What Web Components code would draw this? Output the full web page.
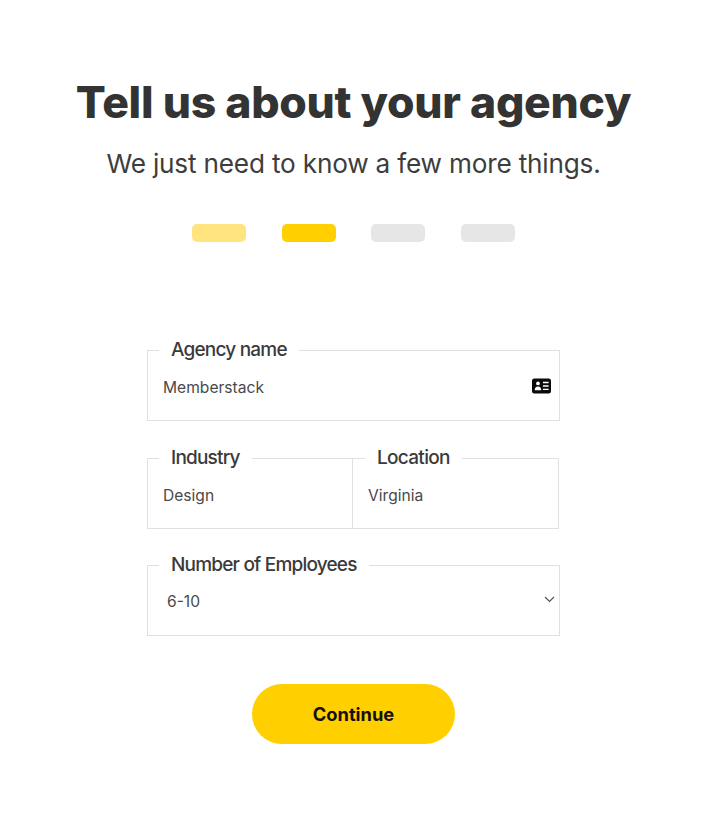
<!DOCTYPE html>
<html lang="en">
<head>
<meta charset="utf-8">
<title>Tell us about your agency</title>
<style>
  html, body { margin: 0; background: #fff; }
  body { font-family: "Inter", "Liberation Sans", sans-serif; color: #333; }
</style>
</head>
<body>
<agency-page>
  <page-heading slot="heading" title="Tell us about your agency" subtitle="We just need to know a few more things."></page-heading>
  <step-dots slot="steps" current="2" total="4"></step-dots>
  <agency-form slot="form">
    <form-field label="Agency name">
      Memberstack
      <svg slot="icon" width="19" height="16" viewBox="0 0 20 16">
        <path fill="#0a0a0a" fill-rule="evenodd" d="M2.5 0h15A2.5 2.5 0 0 1 20 2.500v11a2.500 2.500 0 0 1-2.500 2.500h-15A2.500 2.500 0 0 1 0 13.500v-11A2.500 2.500 0 0 1 2.500 0zM6.300 3.300a2 2 0 1 0 0 4 2 2 0 0 0 0-4zM2.800 12.600h7c0-2.500-1.300-4-3.500-4s-3.500 1.500-3.500 4zM11.500 3.600v1.500h6V3.600zM11.500 7.200v1.500h6V7.200zM11.500 10.800v1.500h6v-1.500z"/>
      </svg>
    </form-field>
    <field-pair>
      <form-field label="Industry" slot="left">Design</form-field>
      <form-field label="Location" slot="right" flush>Virginia</form-field>
    </field-pair>
    <form-field label="Number of Employees" inset>
      6-10
      <svg slot="icon" width="11" height="7" viewBox="0 0 11 7">
        <path fill="none" stroke="#555" stroke-width="1.200" d="M1 1l4.500 4.500L10 1"/>
      </svg>
    </form-field>
  </agency-form>
  <primary-button slot="action">Continue</primary-button>
</agency-page>

<script>
class AgencyPage extends HTMLElement {
  constructor() {
    super();
    this.attachShadow({ mode: "open" }).innerHTML = `
      <style>
        :host { display: flex; flex-direction: column; align-items: center; width: 707px; padding-top: 74px; }
        .form { margin-top: 96px; }
        .action { margin-top: 48px; }
      </style>
      <slot name="heading"></slot>
      <slot name="steps"></slot>
      <div class="form"><slot name="form"></slot></div>
      <div class="action"><slot name="action"></slot></div>
    `;
  }
}

class PageHeading extends HTMLElement {
  constructor() {
    super();
    this.attachShadow({ mode: "open" }).innerHTML = `
      <style>
        :host { display: block; text-align: center; }
        h1 { margin: 0; font: 800 44.5px/56px "Inter", sans-serif; letter-spacing: -0.3px; color: #333; }
        p { margin: 16px 0 0; font: 400 26.2px/36px "Inter", sans-serif; letter-spacing: -0.2px; color: #3d3d3d; }
      </style>
      <h1></h1>
      <p></p>
    `;
  }

  connectedCallback() {
    this.shadowRoot.querySelector("h1").textContent = this.getAttribute("title");
    this.shadowRoot.querySelector("p").textContent = this.getAttribute("subtitle");
  }
}

class StepDots extends HTMLElement {
  constructor() {
    super();
    this.attachShadow({ mode: "open" }).innerHTML = `
      <style>
        :host { display: flex; gap: 35.700px; margin-top: 42px; }
        span { width: 54px; height: 18px; border-radius: 5px; background: #e6e6e6; }
        .done { background: #ffe47f; }
        .current { background: #ffcf00; }
      </style>
    `;
  }

  connectedCallback() {
    const current = Number(this.getAttribute("current"));
    const total = Number(this.getAttribute("total"));
    for (let i = 1; i <= total; i++) {
      const dot = document.createElement("span");
      if (i < current) dot.className = "done";
      if (i === current) dot.className = "current";
      this.shadowRoot.append(dot);
    }
  }
}

class AgencyForm extends HTMLElement {
  constructor() {
    super();
    this.attachShadow({ mode: "open" }).innerHTML = `
      <style>
        :host { display: flex; flex-direction: column; gap: 24.500px; width: 413px; }
      </style>
      <slot></slot>
    `;
  }
}

class FieldPair extends HTMLElement {
  constructor() {
    super();
    this.attachShadow({ mode: "open" }).innerHTML = `
      <style>
        :host { display: grid; grid-template-columns: 206px 206px; margin: 0.500px 0 -0.500px; }
      </style>
      <slot name="left"></slot>
      <slot name="right"></slot>
    `;
  }
}

class FormField extends HTMLElement {
  constructor() {
    super();
    this.attachShadow({ mode: "open" }).innerHTML = `
      <style>
        :host { display: block; }
        fieldset { display: flex; justify-content: space-between; align-items: flex-start; box-sizing: border-box; height: 83px; margin: 0; padding: 0 2px 0 15px; border: 1px solid #e0e0e0; }
        legend { margin-left: -4px; padding: 0 12px; font: 500 19px/24px "Inter", sans-serif; letter-spacing: -0.8px; color: #3a3a3a; }
        :host([flush]) fieldset { border-left: 0; }
        :host([flush]) legend { margin-left: -3px; letter-spacing: -0.7px; }
        :host([inset]) fieldset { padding-left: 19px; }
        :host([inset]) legend { margin-left: -8px; }
        .value { font: 400 15.6px/24px "Inter", sans-serif; color: #4a4a4a; margin-top: 14px; }
        :host([inset]) .value { margin-top: 13px; }
        ::slotted(svg) { margin: 16px 6px 0 0; }
        :host([inset]) ::slotted(svg) { margin: 19px 2px 0 0; }
      </style>
      <fieldset>
        <legend></legend>
        <span class="value"><slot></slot></span>
        <slot name="icon"></slot>
      </fieldset>
    `;
  }

  connectedCallback() {
    this.shadowRoot.querySelector("legend").textContent = this.getAttribute("label");
  }
}

class PrimaryButton extends HTMLElement {
  constructor() {
    super();
    this.attachShadow({ mode: "open" }).innerHTML = `
      <style>
        :host { display: block; }
        button { display: block; width: 203px; height: 60px; border: 0; border-radius: 30px; background: #ffcf00; font: 700 18.300px "Inter", sans-serif; color: #111; }
      </style>
      <button type="button"><slot></slot></button>
    `;
  }
}

customElements.define("agency-page", AgencyPage);
customElements.define("page-heading", PageHeading);
customElements.define("step-dots", StepDots);
customElements.define("agency-form", AgencyForm);
customElements.define("field-pair", FieldPair);
customElements.define("form-field", FormField);
customElements.define("primary-button", PrimaryButton);
</script>
</body>
</html>
